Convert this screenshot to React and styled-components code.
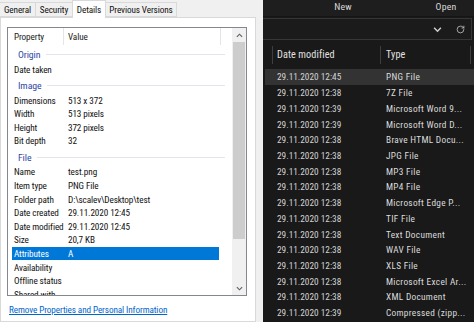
import styled, { createGlobalStyle } from 'styled-components';
import { RotateCw } from 'lucide-react';

const GlobalStyle = createGlobalStyle`
  html, body { margin: 0; padding: 0; background: #191919; }
  * { box-sizing: border-box; }
`;

const Root = styled.div`
  display: flex;
  width: 474px;
  height: 322px;
  overflow: hidden;
`;

/* ---------- properties dialog (left) ---------- */

const PropsPane = styled.div`
  width: 263px;
  flex: none;
  display: flex;
  flex-direction: column;
  background: #f0f0f0;
  font-family: "Roboto Condensed", "DejaVu Sans Condensed", "Liberation Sans", sans-serif;
  font-size: 9.2px;
  letter-spacing: -0.1px;
  color: #111;
`;

const TabStrip = styled.div`
  display: flex;
  align-items: flex-end;
  height: 17px;
  flex: none;
  position: relative;
  z-index: 1;
`;

const Tab = styled.div`
  width: ${(p) => p.$w}px;
  height: ${(p) => (p.$active ? 18 : 15)}px;
  margin-bottom: ${(p) => (p.$active ? -1 : 0)}px;
  margin-left: -1px;
  display: flex;
  align-items: center;
  justify-content: center;
  padding-bottom: ${(p) => (p.$active ? 1 : 0)}px;
  background: ${(p) => (p.$active ? '#ffffff' : '#f0f0f0')};
  border: 1px solid #d9d9d9;
  border-bottom: ${(p) => (p.$active ? 'none' : '1px solid #d9d9d9')};
  white-space: nowrap;
`;

const TabPage = styled.div`
  flex: 1;
  margin-right: 7px;
  padding: 9px 0 0 6px;
  background: #fff;
  border: 1px solid #d9d9d9;
`;

const ListBox = styled.div`
  width: 240px;
  height: 269px;
  display: flex;
  border: 1px solid #828790;
`;

const ListContent = styled.div`
  width: 224px;
  overflow: hidden;
  display: flex;
  flex-direction: column;
`;

const HeaderRow = styled.div`
  display: flex;
  flex: none;
  height: 17px;
`;

const HeaderCell = styled.div`
  width: ${(p) => p.$w}px;
  padding-left: ${(p) => p.$pad}px;
  border-right: 1px solid #e5e5e5;
  line-height: 17px;
  color: #1c1c1c;
`;

const GroupRow = styled.div`
  display: flex;
  align-items: center;
  flex: none;
  height: 17.4px;
  padding: 2px 7px 0 10px;
  color: #3047a4;
  font-size: 9.8px;

  &::after {
    content: '';
    flex: 1;
    height: 1px;
    margin-left: 6px;
    background: #e2e5eb;
  }
`;

const ItemRow = styled.div`
  display: flex;
  align-items: center;
  flex: none;
  height: 13.6px;
  margin: 0 13px 0 4px;
  padding-left: 2px;
  white-space: nowrap;
  background: ${(p) => (p.$selected ? '#0078d7' : 'transparent')};
  color: ${(p) => (p.$selected ? '#fff' : '#111')};
`;

const ItemLabel = styled.span`
  width: 54px;
  flex: none;
`;

const Scrollbar = styled.div`
  width: 14px;
  display: flex;
  flex-direction: column;
  background: #f0f0f0;
`;

const ScrollArrow = styled.div`
  height: 14px;
  flex: none;
  display: flex;
  align-items: center;
  justify-content: center;
`;

const ScrollThumb = styled.div`
  height: 197px;
  margin: 0 1px;
  background: #cdcdcd;
`;

const ScrollTrack = styled.div`
  flex: 1;
`;

const Link = styled.a`
  display: block;
  margin-top: 8px;
  margin-left: 2px;
  line-height: 12px;
  color: #0066cc;
  text-decoration: underline;
  cursor: pointer;
`;

/* ---------- file explorer (right) ---------- */

const Explorer = styled.div`
  flex: 1;
  display: flex;
  flex-direction: column;
  background: #191919;
  font-family: "Roboto Condensed", "DejaVu Sans Condensed", "Liberation Sans", sans-serif;
  font-size: 9.3px;
  color: #dadada;
`;

const TopBar = styled.div`
  display: flex;
  height: 17px;
  flex: none;
  padding-left: 66px;
  gap: 72px;
  background: #1e1e1e;
  border-bottom: 1px solid #151515;
`;

const TopButton = styled.div`
  width: ${(p) => p.$w}px;
  line-height: 14px;
  font-size: 9.8px;
  letter-spacing: 0.2px;
  text-align: center;
  color: #d8d8d8;
`;

const AddressBar = styled.div`
  display: flex;
  align-items: center;
  justify-content: flex-end;
  gap: 14px;
  height: 22px;
  flex: none;
  margin: 1px 2px 0 0;
  padding-right: 6px;
  border: 1px solid #363636;
  border-left: none;
  background: #1b1b1b;
  color: #cfcfcf;
`;

const ColumnHeader = styled.div`
  display: flex;
  align-items: stretch;
  height: 18px;
  flex: none;
  margin: 6px 0 2px 9px;
`;

const HeaderCol = styled.div`
  width: ${(p) => p.$w}px;
  padding-left: ${(p) => p.$pad}px;
  border-left: 1px solid #3e3e3e;
  border-right: ${(p) => (p.$last ? '1px solid #3e3e3e' : 'none')};
  line-height: 18px;
  font-size: 10.2px;
  letter-spacing: 0.1px;
  color: #e2e2e2;
`;

const FileRows = styled.div`
  margin-top: 3px;
  display: flex;
  flex-direction: column;
`;

const FileRow = styled.div`
  display: flex;
  align-items: center;
  height: 15.73px;
  margin-left: 2px;
  padding-left: 12px;
  white-space: nowrap;
  background: ${(p) => (p.$selected ? '#333333' : 'transparent')};
`;

const DateCol = styled.span`
  width: 109px;
  flex: none;
  color: #d4d4d4;
`;

const TypeCol = styled.span`
  letter-spacing: 0.3px;
  color: #dcdcdc;
`;

const Chevron = ({ up, size = 7, color = '#606060' }) => (
  <svg width={size} height={size} viewBox="0 0 8 8">
    <polyline
      points={up ? '1,5.5 4,2.5 7,5.5' : '1,2.5 4,5.5 7,2.5'}
      fill="none"
      stroke={color}
      strokeWidth="1.3"
    />
  </svg>
);

const tabs = [
  { label: 'General', w: 37 },
  { label: 'Security', w: 38 },
  { label: 'Details', w: 34, active: true },
  { label: 'Previous Versions', w: 72 },
];

const groups = [
  { title: 'Origin', items: [['Date taken', '']] },
  {
    title: 'Image',
    items: [
      ['Dimensions', '513 x 372'],
      ['Width', '513 pixels'],
      ['Height', '372 pixels'],
      ['Bit depth', '32'],
    ],
  },
  {
    title: 'File',
    items: [
      ['Name', 'test.png'],
      ['Item type', 'PNG File'],
      ['Folder path', 'D:\\scalev\\Desktop\\test'],
      ['Date created', '29.11.2020 12:45'],
      ['Date modified', '29.11.2020 12:45'],
      ['Size', '20,7 KB'],
      ['Attributes', 'A'],
      ['Availability', ''],
      ['Offline status', ''],
      ['Shared with', ''],
    ],
  },
];

const files = [
  ['29.11.2020 12:45', 'PNG File'],
  ['29.11.2020 12:38', '7Z File'],
  ['29.11.2020 12:39', 'Microsoft Word 9...'],
  ['29.11.2020 12:39', 'Microsoft Word D...'],
  ['29.11.2020 12:38', 'Brave HTML Docu...'],
  ['29.11.2020 12:38', 'JPG File'],
  ['29.11.2020 12:38', 'MP3 File'],
  ['29.11.2020 12:38', 'MP4 File'],
  ['29.11.2020 12:38', 'Microsoft Edge P...'],
  ['29.11.2020 12:38', 'TIF File'],
  ['29.11.2020 12:38', 'Text Document'],
  ['29.11.2020 12:38', 'WAV File'],
  ['29.11.2020 12:38', 'XLS File'],
  ['29.11.2020 12:38', 'Microsoft Excel Ar...'],
  ['29.11.2020 12:38', 'XML Document'],
  ['29.11.2020 12:39', 'Compressed (zipp...'],
];

export default function App() {
  return (
    <>
      <GlobalStyle />
      <Root>
        <PropsPane>
          <TabStrip>
            {tabs.map((t) => (
              <Tab key={t.label} $w={t.w} $active={t.active}>
                {t.label}
              </Tab>
            ))}
          </TabStrip>
          <TabPage>
            <ListBox>
              <ListContent>
                <HeaderRow>
                  <HeaderCell $w={56} $pad={6}>Property</HeaderCell>
                  <HeaderCell $w={157} $pad={4}>Value</HeaderCell>
                </HeaderRow>
                {groups.map((g) => (
                  <div key={g.title}>
                    <GroupRow>{g.title}</GroupRow>
                    {g.items.map(([label, value]) => (
                      <ItemRow key={label} $selected={label === 'Attributes'}>
                        <ItemLabel>{label}</ItemLabel>
                        <span>{value}</span>
                      </ItemRow>
                    ))}
                  </div>
                ))}
              </ListContent>
              <Scrollbar>
                <ScrollArrow>
                  <Chevron up />
                </ScrollArrow>
                <ScrollThumb />
                <ScrollTrack />
                <ScrollArrow>
                  <Chevron />
                </ScrollArrow>
              </Scrollbar>
            </ListBox>
            <Link>Remove Properties and Personal Information</Link>
          </TabPage>
        </PropsPane>

        <Explorer>
          <TopBar>
            <TopButton $w={28}>New</TopButton>
            <TopButton $w={34}>Open</TopButton>
          </TopBar>
          <AddressBar>
            <Chevron size={9} color="#cfcfcf" />
            <RotateCw size={9} strokeWidth={2} />
          </AddressBar>
          <ColumnHeader>
            <HeaderCol $w={108} $pad={4}>Date modified</HeaderCol>
            <HeaderCol $w={91} $pad={5} $last>Type</HeaderCol>
          </ColumnHeader>
          <FileRows>
            {files.map(([date, type], i) => (
              <FileRow key={i} $selected={i === 0}>
                <DateCol>{date}</DateCol>
                <TypeCol>{type}</TypeCol>
              </FileRow>
            ))}
          </FileRows>
        </Explorer>
      </Root>
    </>
  );
}
